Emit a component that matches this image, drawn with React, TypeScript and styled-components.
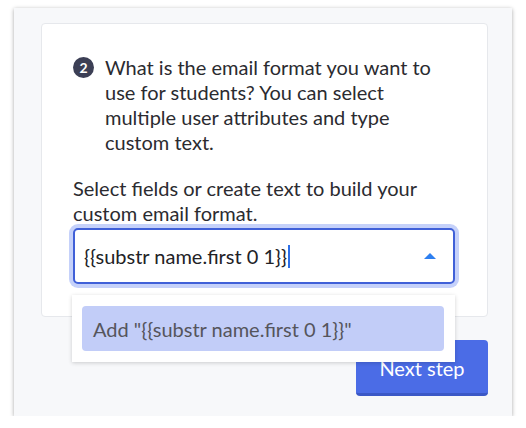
import React from "react";
import styled, { createGlobalStyle } from "styled-components";

const Global = createGlobalStyle`
  html, body { margin: 0; padding: 0; background: #ffffff; }
  body { font-family: "Lato", "Noto Sans", sans-serif; -webkit-font-smoothing: antialiased; }
`;

const Frame = styled.div`
  box-sizing: border-box;
  margin: 8px 0 0 14px;
  width: 498px;
  height: 408px;
  background: #f7f8fa;
  box-shadow: 0 1px 4px rgba(0, 0, 0, 0.35);
  padding: 15px 24px 0 27px;
  display: flex;
  flex-direction: column;
  align-items: stretch;
`;

const Card = styled.div`
  box-sizing: border-box;
  width: 447px;
  height: 294px;
  background: #ffffff;
  border: 1px solid #e6e8ec;
  border-radius: 4px;
  padding: 31px 31px 0 31px;
  display: flex;
  flex-direction: column;
`;

const Question = styled.div`
  display: flex;
  align-items: flex-start;
  gap: 11px;
`;

const Badge = styled.span`
  flex: none;
  width: 21px;
  height: 21px;
  margin-top: 2px;
  border-radius: 50%;
  background: #3c3f55;
  color: #ffffff;
  font-size: 14px;
  font-weight: 700;
  display: flex;
  align-items: center;
  justify-content: center;
`;

const Text = styled.p`
  margin: 0;
  font-size: 20px;
  line-height: 25px;
  color: #2b2b30;
`;

const Hint = styled(Text)`
  margin-top: 21px;
`;

const Field = styled.div`
  position: relative;
  margin-top: 2px;
`;

const Input = styled.div`
  box-sizing: border-box;
  height: 56px;
  width: 382px;
  border: 2px solid #4060d8;
  border-radius: 5px;
  box-shadow: 0 0 0 4px #c5d1fa;
  background: #ffffff;
  display: flex;
  align-items: center;
  padding: 0 17px 0 9px;
`;

const Value = styled.span`
  font-size: 20px;
  color: #222226;
`;

const Caret = styled.span`
  display: inline-block;
  width: 2px;
  height: 23px;
  background: #2d6fe8;
  margin-left: 1px;
`;

const Arrow = styled.span`
  margin-left: auto;
  width: 0;
  height: 0;
  border-left: 6px solid transparent;
  border-right: 6px solid transparent;
  border-bottom: 6px solid #2d7ff0;
`;

const Menu = styled.div`
  position: absolute;
  z-index: 2;
  left: -1px;
  top: 67px;
  box-sizing: border-box;
  width: 383px;
  height: 67px;
  background: #ffffff;
  box-shadow: 0 1px 4px rgba(0, 0, 0, 0.18);
  padding: 11px 11px 11px 10px;
`;

const Option = styled.div`
  box-sizing: border-box;
  height: 45px;
  background: #c2cdf8;
  border-radius: 4px;
  display: flex;
  align-items: center;
  padding-left: 11px;
  font-size: 20px;
  color: #55555c;
`;

const Actions = styled.div`
  display: flex;
  justify-content: flex-end;
  width: 447px;
  margin-top: 23px;
`;

const Button = styled.button`
  box-sizing: border-box;
  width: 132px;
  height: 56px;
  border: none;
  border-bottom: 3px solid #3b58c6;
  border-radius: 4px;
  background: #4b6ce6;
  color: #ffffff;
  font-family: inherit;
  font-size: 20px;
  padding: 3px 0 0;
`;

export default function App() {
  return (
    <>
      <Global />
      <Frame>
        <Card>
          <Question>
            <Badge>2</Badge>
            <Text>
              What is the email format you want to use for students? You can
              select multiple user attributes and type custom text.
            </Text>
          </Question>
          <Hint>Select fields or create text to build your custom email format.</Hint>
          <Field>
            <Input>
              <Value>{"{{substr name.first 0 1}}"}</Value>
              <Caret />
              <Arrow />
            </Input>
            <Menu>
              <Option>{'Add "{{substr name.first 0 1}}"'}</Option>
            </Menu>
          </Field>
        </Card>
        <Actions>
          <Button>Next step</Button>
        </Actions>
      </Frame>
    </>
  );
}
